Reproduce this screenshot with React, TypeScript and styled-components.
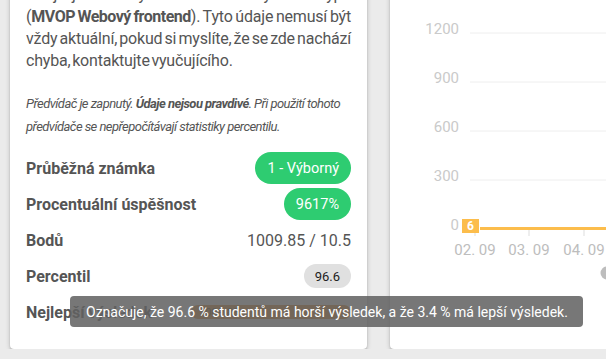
import * as React from "react";
import styled, { createGlobalStyle } from "styled-components";

const GlobalStyle = createGlobalStyle`
  html, body {
    margin: 0;
    padding: 0;
    background: #ebebeb;
    overflow: hidden;
    font-family: Roboto, "Liberation Sans", sans-serif;
  }
`;

const Page = styled.div`
  display: flex;
  align-items: stretch;
  gap: 23px;
  padding-left: 10px;
  margin-top: -32px;
  width: 900px;
`;

const Card = styled.div<{ $width: number }>`
  flex-shrink: 0;
  width: ${(p) => p.$width}px;
  box-sizing: border-box;
  background: #fff;
  border-radius: 4px;
  box-shadow: 0 2px 2px rgba(0, 0, 0, 0.14), 0 3px 1px -2px rgba(0, 0, 0, 0.12),
    0 1px 5px rgba(0, 0, 0, 0.2);
`;

const InfoCard = styled(Card)`
  padding: 16px 16px 21px 16px;
  color: #555;
  position: relative;
`;

const Lead = styled.p`
  margin: 0;
  font-size: 16px;
  line-height: 22px;
  text-align: justify;
  letter-spacing: -0.2px;
  word-spacing: -2px;

  b {
    letter-spacing: -0.5px;
  }
`;

// the line above the fold, only its descenders show
const LeadLine = styled.span`
  display: block;
  text-align-last: justify;
  white-space: nowrap;
`;

const Note = styled.p`
  margin: 20px 0 14px;
  font-size: 13px;
  line-height: 23px;
  font-style: italic;
  letter-spacing: -0.55px;
`;

const Stats = styled.div`
  display: flex;
  flex-direction: column;
  gap: 4px;
`;

const Row = styled.div`
  display: flex;
  align-items: center;
  justify-content: space-between;
  height: 32px;
`;

const Label = styled.span`
  font-size: 16px;
  font-weight: 700;
  color: #555;
`;

const Value = styled.span`
  font-size: 16px;
  color: #555;
`;

const Chip = styled.span<{ $tone: "green" | "grey" | "orange" }>`
  display: inline-flex;
  align-items: center;
  border-radius: 16px;
  white-space: nowrap;
  ${(p) =>
    p.$tone === "green"
      ? `background: #2ecc71; color: #fff; height: 32px; padding: 0 12px; font-size: 14.5px;`
      : p.$tone === "grey"
      ? `background: #e0e0e0; color: #222; height: 24px; padding: 0 11px; font-size: 13px;`
      : `background: #e08a28; color: #5a3a10; height: 14px; padding: 0 8px; font-size: 11px; width: 144px;`}
`;

const Tooltip = styled.div`
  position: absolute;
  left: 60px;
  top: 328px;
  width: 513px;
  height: 31px;
  box-sizing: border-box;
  padding: 0 16px;
  display: flex;
  align-items: center;
  border-radius: 4px;
  background: rgba(97, 97, 97, 0.86);
  color: #fff;
  font-size: 14px;
  white-space: nowrap;
  z-index: 10;
`;

const ChartCard = styled(Card)`
  overflow: hidden;
`;

const gridYs = [65, 114, 163, 212, 261];
const yLabels = ["1200", "900", "600", "300", "0"];
const xLabels = [
  { x: 85, t: "02. 09" },
  { x: 139, t: "03. 09" },
  { x: 194, t: "04. 09" },
];

function Chart() {
  return (
    <svg width="400" height="380" style={{ display: "block" }}>
      {gridYs.map((y, i) => (
        <g key={y}>
          {i < 4 && <line x1="80" x2="400" y1={y} y2={y} stroke="#eeeeee" strokeWidth="1" />}
          <text
            x="69"
            y={y + 1}
            textAnchor="end"
            fontSize="15"
            fill="#cacaca"
            fontFamily="Roboto, sans-serif"
          >
            {yLabels[i]}
          </text>
        </g>
      ))}
      {xLabels.map((l) => (
        <g key={l.t}>
          <line x1={l.x} x2={l.x} y1="262" y2="268" stroke="#dddddd" strokeWidth="1" />
          <text
            x={l.x}
            y="287"
            textAnchor="middle"
            fontSize="15"
            fill="#bdbdbd"
            fontFamily="Roboto, sans-serif"
          >
            {l.t}
          </text>
        </g>
      ))}
      <line x1="90" x2="400" y1="260.5" y2="260.5" stroke="#fcbd4c" strokeWidth="3" />
      <rect x="72" y="251" width="17" height="14" fill="#fcbd4c" />
      <text
        x="80.5"
        y="262"
        textAnchor="middle"
        fontSize="12"
        fontWeight="700"
        fill="#fff"
        fontFamily="Roboto, sans-serif"
      >
        6
      </text>
      <circle cx="217" cy="305" r="6.5" fill="#bdbdbd" />
    </svg>
  );
}

export default function App() {
  return (
    <>
      <GlobalStyle />
      <Page>
        <InfoCard $width={357}>
          <Lead>
            <LeadLine>Údaje jsou brány z hodnoticího systému typu</LeadLine>
            (<b>MVOP Webový frontend</b>). Tyto údaje nemusí být vždy aktuální,
            pokud si myslíte, že se zde nachází chyba, kontaktujte vyučujícího.
          </Lead>
          <Note>
            Předvídač je zapnutý. <b>Údaje nejsou pravdivé</b>. Při použití tohoto
            předvídače se nepřepočítávají statistiky percentilu.
          </Note>
          <Stats>
            <Row>
              <Label>Průběžná známka</Label>
              <Chip $tone="green">1 - Výborný</Chip>
            </Row>
            <Row>
              <Label>Procentuální úspěšnost</Label>
              <Chip $tone="green">9617%</Chip>
            </Row>
            <Row>
              <Label>Bodů</Label>
              <Value>1009.85 / 10.5</Value>
            </Row>
            <Row>
              <Label>Percentil</Label>
              <Chip $tone="grey">96.6</Chip>
            </Row>
            <Row>
              <Label>Nejlepší výsledek</Label>
              <Chip $tone="orange">1009.85</Chip>
            </Row>
          </Stats>
          <Tooltip>
            Označuje, že 96.6 % studentů má horší výsledek, a že 3.4 % má lepší
            výsledek.
          </Tooltip>
        </InfoCard>
        <ChartCard $width={420}>
          <Chart />
        </ChartCard>
      </Page>
    </>
  );
}
